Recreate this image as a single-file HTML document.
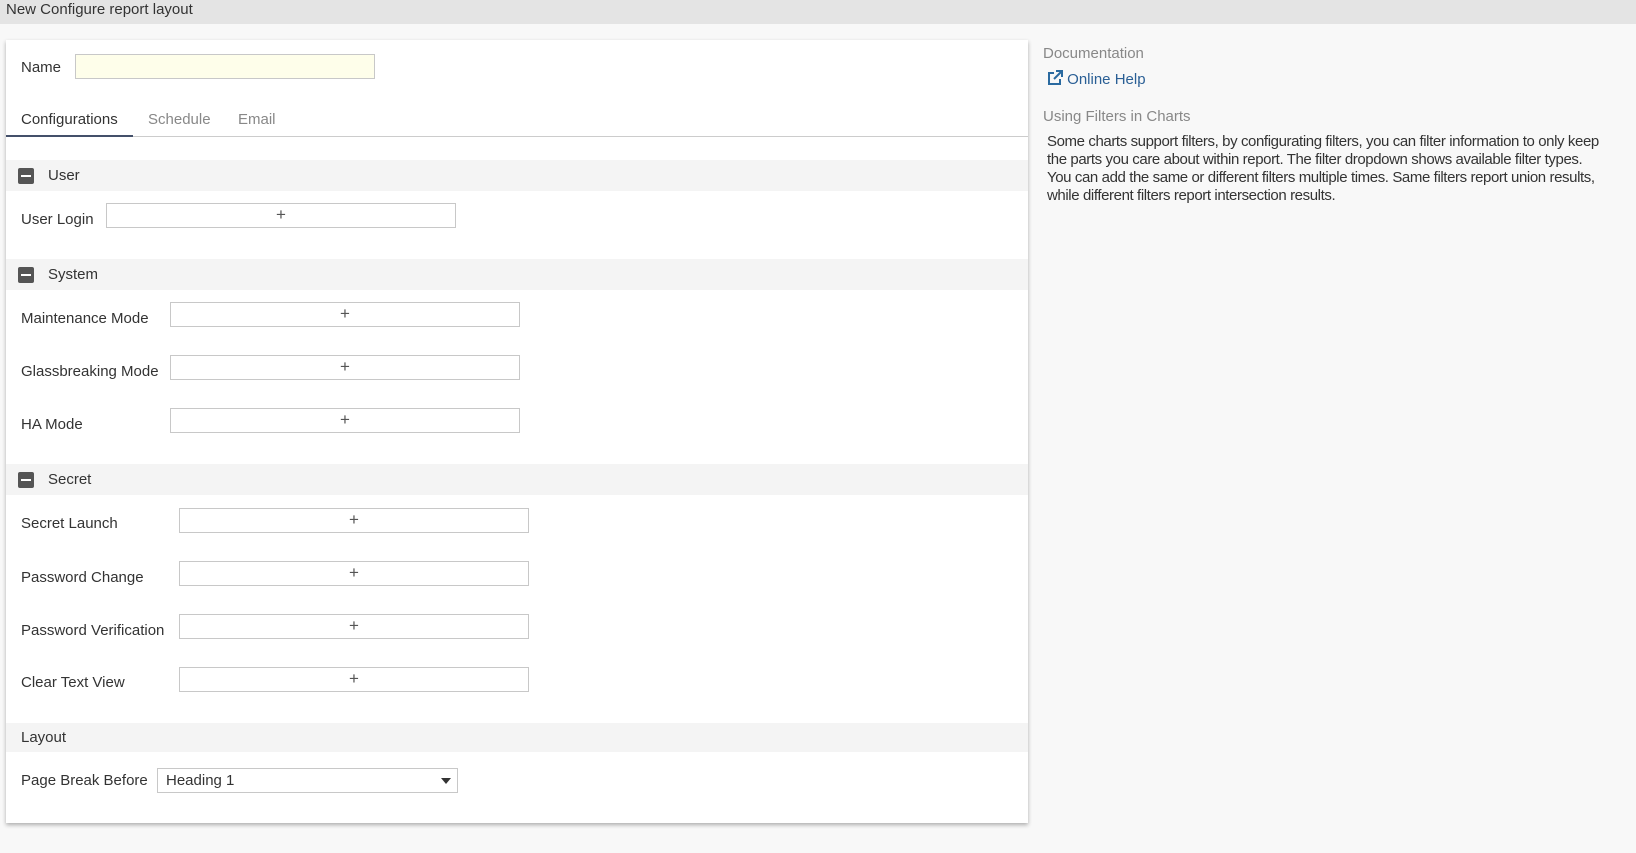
<!DOCTYPE html>
<html><head><meta charset="utf-8"><style>
*{box-sizing:border-box;margin:0;padding:0}
body{width:1636px;height:853px;background:#f8f8f8;font-family:"Liberation Sans",sans-serif;font-size:15px;color:#333;position:relative;overflow:hidden}
.top{position:absolute;left:0;top:0;width:1636px;height:24px;background:#e4e4e4;padding:1px 6px;font-size:15px;color:#333}
.panel{position:absolute;left:6px;top:40px;width:1022px;height:783px;background:#fff;box-shadow:0 2px 4px rgba(0,0,0,.3)}
.a{position:absolute;white-space:nowrap}
.inp{position:absolute;border:1px solid #c8c8c8;background:#fff;height:25px;text-align:center;line-height:22px;font-size:17px;color:#555}
.hdr{position:absolute;left:0;width:1022px;height:31px;background:#f4f4f4}
.hdr .t{position:absolute;left:42px;top:7px}
.mi{position:absolute;left:12px;top:8px;width:16px;height:16px;background:#555;border-radius:2px}
.mi:after{content:"";position:absolute;left:3px;top:7px;width:10px;height:2px;background:#fff}
.lbl{position:absolute;left:15px}
</style></head><body>
<div class="top">New Configure report layout</div>
<div class="panel">
<div class="a" style="left:15px;top:19px">Name</div>
<div class="inp" style="left:69px;top:14px;width:300px;background:#fefeea"></div>
<div class="a" style="left:15px;top:71px">Configurations</div>
<div class="a" style="left:142px;top:71px;color:#888">Schedule</div>
<div class="a" style="left:232px;top:71px;color:#888">Email</div>
<div style="position:absolute;left:0;top:96px;width:1022px;height:1px;background:#ccc"></div>
<div style="position:absolute;left:0;top:95px;width:127px;height:2px;background:#44506a"></div>

<div class="hdr" style="top:120px"><div class="mi"></div><div class="t">User</div></div>
<div class="lbl" style="top:171px">User Login</div>
<div class="inp" style="left:100px;top:163px;width:350px">+</div>

<div class="hdr" style="top:219px"><div class="mi"></div><div class="t">System</div></div>
<div class="lbl" style="top:270px">Maintenance Mode</div>
<div class="inp" style="left:164px;top:262px;width:350px">+</div>
<div class="lbl" style="top:323px">Glassbreaking Mode</div>
<div class="inp" style="left:164px;top:315px;width:350px">+</div>
<div class="lbl" style="top:376px">HA Mode</div>
<div class="inp" style="left:164px;top:368px;width:350px">+</div>

<div class="hdr" style="top:424px"><div class="mi"></div><div class="t">Secret</div></div>
<div class="lbl" style="top:475px">Secret Launch</div>
<div class="inp" style="left:173px;top:468px;width:350px">+</div>
<div class="lbl" style="top:529px">Password Change</div>
<div class="inp" style="left:173px;top:521px;width:350px">+</div>
<div class="lbl" style="top:582px">Password Verification</div>
<div class="inp" style="left:173px;top:574px;width:350px">+</div>
<div class="lbl" style="top:634px">Clear Text View</div>
<div class="inp" style="left:173px;top:627px;width:350px">+</div>

<div class="hdr" style="top:683px;height:29px"><div class="t" style="left:15px;top:6px">Layout</div></div>
<div class="lbl" style="top:732px">Page Break Before</div>
<div class="inp" style="left:151px;top:728px;width:301px;text-align:left;padding-left:8px;font-size:15px;line-height:23px;color:#333">Heading 1<span style="position:absolute;right:6px;top:9px;width:0;height:0;border-left:5px solid transparent;border-right:5px solid transparent;border-top:6px solid #333"></span></div>
</div>

<div class="a" style="left:1043px;top:45px;color:#888">Documentation</div>
<div class="a" style="left:1047px;top:70px;color:#2a5f95">
<svg width="16" height="16" viewBox="0 0 16 16" style="vertical-align:-2px"><path d="M7 3H2v11h11V9" fill="none" stroke="#2a6aa0" stroke-width="2"/><path d="M9 1h6v6M15 1L7 9" fill="none" stroke="#2a6aa0" stroke-width="2"/></svg> Online Help</div>
<div class="a" style="left:1043px;top:108px;color:#888">Using Filters in Charts</div>
<div style="position:absolute;left:1047px;top:133px;line-height:18px;color:#333;letter-spacing:-0.4px;white-space:nowrap">Some charts support filters, by configurating filters, you can filter information to only keep<br>the parts you care about within report. The filter dropdown shows available filter types.<br>You can add the same or different filters multiple times. Same filters report union results,<br>while different filters report intersection results.</div>
</body></html>
